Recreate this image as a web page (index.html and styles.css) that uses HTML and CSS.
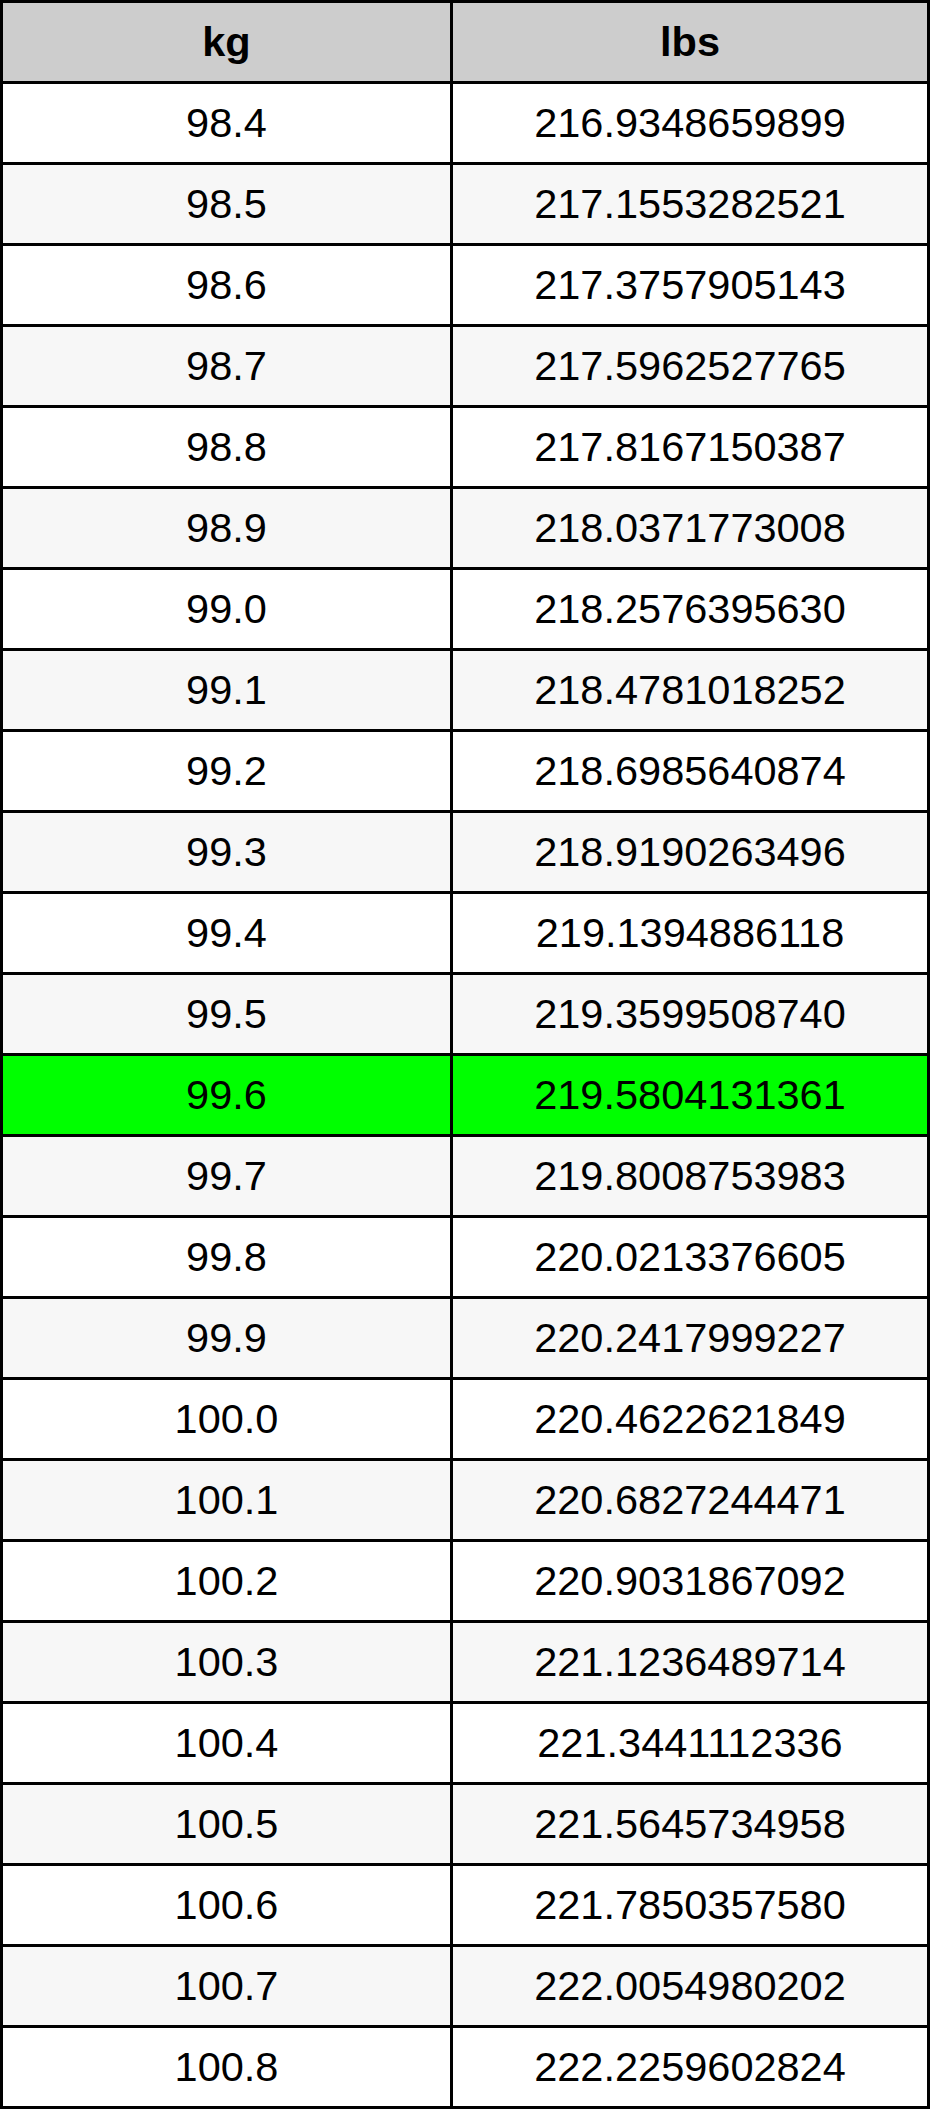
FILE: index.html
```html
<!DOCTYPE html>
<html>
<head>
<meta charset="utf-8">
<link rel="stylesheet" href="styles.css">
</head>
<body>
<table class="conv">
<colgroup><col class="c-kg"><col class="c-lbs"></colgroup>
<thead>
<tr><th>kg</th><th>lbs</th></tr>
</thead>
<tbody>
<tr><td>98.4</td><td>216.9348659899</td></tr>
<tr><td>98.5</td><td>217.1553282521</td></tr>
<tr><td>98.6</td><td>217.3757905143</td></tr>
<tr><td>98.7</td><td>217.5962527765</td></tr>
<tr><td>98.8</td><td>217.8167150387</td></tr>
<tr><td>98.9</td><td>218.0371773008</td></tr>
<tr><td>99.0</td><td>218.2576395630</td></tr>
<tr><td>99.1</td><td>218.4781018252</td></tr>
<tr><td>99.2</td><td>218.6985640874</td></tr>
<tr><td>99.3</td><td>218.9190263496</td></tr>
<tr><td>99.4</td><td>219.1394886118</td></tr>
<tr><td>99.5</td><td>219.3599508740</td></tr>
<tr class="hl"><td>99.6</td><td>219.5804131361</td></tr>
<tr><td>99.7</td><td>219.8008753983</td></tr>
<tr><td>99.8</td><td>220.0213376605</td></tr>
<tr><td>99.9</td><td>220.2417999227</td></tr>
<tr><td>100.0</td><td>220.4622621849</td></tr>
<tr><td>100.1</td><td>220.6827244471</td></tr>
<tr><td>100.2</td><td>220.9031867092</td></tr>
<tr><td>100.3</td><td>221.1236489714</td></tr>
<tr><td>100.4</td><td>221.3441112336</td></tr>
<tr><td>100.5</td><td>221.5645734958</td></tr>
<tr><td>100.6</td><td>221.7850357580</td></tr>
<tr><td>100.7</td><td>222.0054980202</td></tr>
<tr><td>100.8</td><td>222.2259602824</td></tr>
</tbody>
</table>
</body>
</html>
```
FILE: styles.css
```css
html, body {
  margin: 0;
  padding: 0;
  background: #ffffff;
}
.conv {
  width: 930px;
  table-layout: fixed;
  border-collapse: separate;
  border-spacing: 0;
  border-top: 3px solid #000;
  border-left: 3px solid #000;
  font-family: "Liberation Sans", Arial, sans-serif;
  font-size: 41.5px;
  color: #000;
}
.c-kg { width: 450px; }
.conv th, .conv td {
  padding: 0;
  height: 78px;
  line-height: 78px;
  text-align: center;
  border-right: 3px solid #000;
  border-bottom: 3px solid #000;
  white-space: nowrap;
  overflow: hidden;
}
.conv th {
  background: #cdcdcd;
  font-weight: bold;
}
.conv tbody tr:nth-child(odd) td { background: #ffffff; }
.conv tbody tr:nth-child(even) td { background: #f7f7f7; }
.conv tbody tr.hl td { background: #00ff00; }
```
